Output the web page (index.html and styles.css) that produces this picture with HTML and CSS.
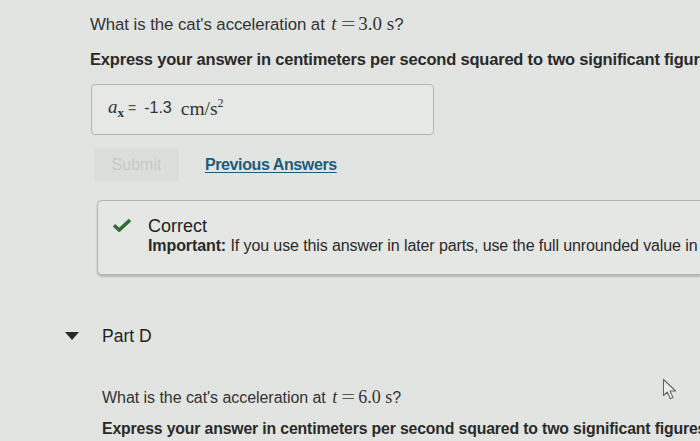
FILE: index.html
```html
<!DOCTYPE html>
<html>
<head>
<meta charset="utf-8">
<link rel="stylesheet" href="styles.css">
</head>
<body>
<div class="page">
  <section class="part-c">
    <p class="question">What is the cat's acceleration at <span class="math"><i>t</i><span class="rel">=</span>3.0 s</span>?</p>
    <p class="instr">Express your answer in centimeters per second squared to two significant figures.</p>
    <div class="answer-box">
      <span class="math var"><i>a</i><sub>x</sub></span><span class="eq">=</span><span class="val">-1.3</span><span class="math unit">cm/s<sup>2</sup></span>
    </div>
    <div class="actions">
      <span class="submit">Submit</span>
      <a class="prev" href="#">Previous Answers</a>
    </div>
    <div class="feedback">
      <svg class="check" viewBox="0 0 20 14" width="20" height="14"><path d="M2 7.2 L7.2 12 L18 2" fill="none" stroke="#2f6d36" stroke-width="3.6" stroke-linecap="butt" stroke-linejoin="miter"/></svg>
      <div class="fb-text">
        <div class="fb-title">Correct</div>
        <div class="fb-note"><b>Important:</b> If you use this answer in later parts, use the full unrounded value in your calculations.</div>
      </div>
    </div>
  </section>
  <section class="part-d">
    <div class="part-head">
      <span class="tri"></span>
      <span class="part-title">Part D</span>
    </div>
    <div class="q-row">
      <p class="question">What is the cat's acceleration at <span class="math"><i>t</i><span class="rel">=</span>6.0 s</span>?</p>
      <svg class="cursor" viewBox="0 0 16 23" width="16" height="23"><path d="M1.5 1.5 L1.5 17.5 L5.3 14 L8.3 20.8 L11 19.6 L8.1 13 L13.6 13 Z" fill="#eeefed" stroke="#666" stroke-width="1.1" stroke-linejoin="round"/></svg>
    </div>
    <p class="instr">Express your answer in centimeters per second squared to two significant figures.</p>
  </section>
</div>
</body>
</html>
```

FILE: styles.css
```css
html, body {
  margin: 0;
  padding: 0;
}
body {
  background: #e2e4e2;
  font-family: "Liberation Sans", Arial, sans-serif;
  color: #2b2b2b;
  width: 700px;
  height: 441px;
  overflow: hidden;
}
.page {
  padding-top: 14px;
}
p { margin: 0; }
.part-c {
  padding-left: 90px;
}
.question {
  font-size: 16.8px;
  letter-spacing: -0.05px;
  line-height: 20px;
  white-space: nowrap;
  color: #333;
}
.math {
  font-family: "Liberation Serif", "Times New Roman", serif;
  font-size: 19px;
  letter-spacing: 0;
}
.math i { padding-left: 2px; }
.rel {
  display: inline-block;
  transform: scaleX(1.35);
  margin: 0 5px 0 6px;
  color: #555;
}
.instr {
  margin-top: 14px;
  font-size: 16.5px;
  font-weight: bold;
  letter-spacing: -0.2px;
  white-space: nowrap;
  line-height: 20px;
  color: #2a2a2a;
}
.answer-box {
  margin-top: 15px;
  margin-left: 1px;
  width: 343px;
  height: 51px;
  border: 1px solid #b4b6b4;
  border-radius: 4px;
  background: #e6e8e6;
  display: flex;
  align-items: center;
  padding-left: 16px;
  padding-bottom: 3px;
  box-sizing: border-box;
  font-size: 16px;
}
.var { font-size: 19px; color: #333; }
.var i { padding-left: 0; }
.var sub {
  font-family: "Liberation Serif", "Times New Roman", serif;
  font-size: 13px;
  font-weight: bold;
  vertical-align: -4px;
}
.eq { padding: 0 8px 0 4px; color: #555; font-size: 14px; }
.val { padding-right: 9px; color: #333; }
.unit { font-size: 19.5px; color: #333; }
.unit sup { font-size: 12px; vertical-align: 8px; }
.actions {
  margin-top: 13px;
  display: flex;
  align-items: center;
  gap: 26px;
}
.submit {
  margin-left: 4px;
  width: 85px;
  height: 33px;
  background: #dcdedc;
  color: #c7c9c7;
  font-size: 16px;
  display: flex;
  align-items: center;
  justify-content: center;
}
.prev {
  color: #1d5d78;
  font-weight: bold;
  font-size: 16px;
  letter-spacing: -0.4px;
  text-decoration: underline;
  text-underline-offset: 2px;
}
.feedback {
  margin-top: 19px;
  margin-left: 7px;
  height: 75px;
  border: 1px solid #b4b6b4;
  border-right: none;
  border-radius: 5px 0 0 5px;
  box-shadow: 0 2px 2px rgba(0,0,0,0.2);
  box-sizing: border-box;
  display: flex;
  align-items: flex-start;
  padding: 15px 0 0 14px;
  background: #e5e7e5;
}
.check { flex-shrink: 0; margin-top: 2px; margin-right: 16px; }
.fb-text { flex-shrink: 0; }
.fb-title {
  font-size: 18px;
  line-height: 20px;
  color: #222;
}
.fb-note {
  font-size: 16px;
  line-height: 20px;
  letter-spacing: -0.1px;
  white-space: nowrap;
  color: #2a2a2a;
}
.part-d {
  padding-left: 102px;
}
.part-head {
  display: flex;
  align-items: center;
  margin-left: -37px;
  margin-top: 50px;
  height: 22px;
}
.tri {
  flex-shrink: 0;
  width: 0; height: 0;
  border-left: 7px solid transparent;
  border-right: 7px solid transparent;
  border-top: 8px solid #2a2a2a;
  margin-right: 23px;
}
.part-title {
  font-size: 17.5px;
  color: #222;
}
.q-row {
  margin-top: 40px;
  display: flex;
  align-items: center;
  height: 20px;
}
.part-d .question { font-size: 16px; }
.part-d .math { font-size: 18px; }
.q-row .cursor { flex-shrink: 0; margin-left: 261px; margin-top: -15px; }
.part-d .instr { margin-top: 12px; font-size: 15.8px; letter-spacing: -0.15px; }
```
